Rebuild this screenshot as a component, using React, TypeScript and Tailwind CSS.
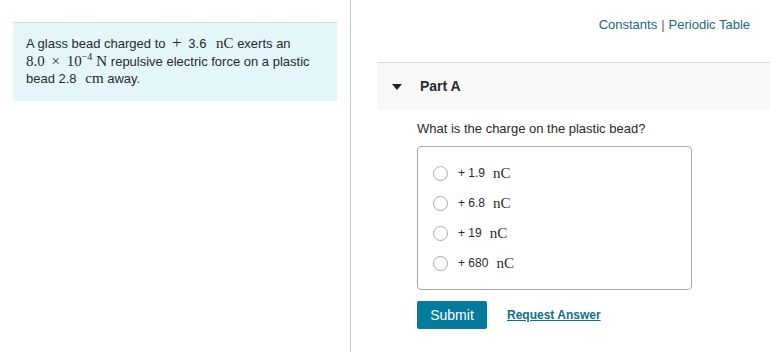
import React from 'react';

const sans = { fontFamily: '"Liberation Sans", Arial, sans-serif' };

const M: React.FC<{ children: React.ReactNode; className?: string }> = ({ children, className }) => (
  <span className={`font-['Liberation_Serif',serif] text-[15px] ${className ?? ''}`}>{children}</span>
);

const options = ['1.9', '6.8', '19', '680'];

export default function App() {
  return (
    <div className="flex w-[777px] h-[352px] bg-white text-[13px] text-[#2a2a2a]" style={sans}>
      {/* Problem statement */}
      <div className="w-[351px] shrink-0 border-r border-[#b9cde2] pt-[22px] pl-[13px] pr-[13px]">
        <div className="h-[79px] bg-[#e3f6f9] border-t border-[#d5dde0] pl-[13px] pr-2 pt-[11px] leading-[17.5px] whitespace-nowrap">
          A glass bead charged to <M className="mx-[3px] text-[17px]">+</M> 3.6 <M className="ml-[6px]">nC</M> exerts an
          <br />
          <M>
            8.0 <span className="mx-[3px]">×</span> 10
            <sup className="text-[10px] leading-none relative -top-[6px]">−4</sup>
            <span className="ml-[4px]">N</span>
          </M>{' '}
          repulsive electric force on a plastic
          <br />
          bead 2.8 <M className="ml-[5px]">cm</M> away.
        </div>
      </div>

      {/* Right column */}
      <div className="flex-1 flex flex-col">
        <div className="h-[46px] flex items-start justify-end pr-[27px] pt-[15px] text-[#17697d]">
          <span>Constants</span>
          <span className="mx-[4px] text-[#666]">|</span>
          <span>Periodic Table</span>
        </div>

        <div className="ml-[26px] mr-[7px] mt-[16px]">
          <div className="h-[48px] bg-[#f8f8f8] border-t border-[#dcdcdc] flex items-center">
            <svg width="10" height="6" viewBox="0 0 10 6" className="ml-[15px]">
              <path d="M0 0 L10 0 L5 6 Z" fill="#222" />
            </svg>
            <span className="ml-[18px] font-bold text-[14px]">Part A</span>
          </div>

          <div className="pl-[40px] pt-[11px]">
            <p className="leading-[16px]">What is the charge on the plastic bead?</p>

            <div className="mt-[9px] w-[275px] h-[144px] border border-[#a8a8a8] rounded-[4px] pt-[11px] pl-[15px] flex flex-col">
              {options.map((o) => (
                <label key={o} className="h-[30px] flex items-center">
                  <span className="w-[15px] h-[15px] rounded-full border border-[#aaaaaa] bg-white" />
                  <span className="ml-[10px] text-[12px]">+ {o}</span>
                  <M className="ml-[8px]">nC</M>
                </label>
              ))}
            </div>

            <div className="mt-[11px] flex items-center">
              <button className="w-[70px] h-[28px] bg-[#047a9c] text-white text-[14px] rounded-[2px]">
                Submit
              </button>
              <a className="ml-[20px] text-[12px] font-bold text-[#0f6f8c] underline">Request Answer</a>
            </div>
          </div>
        </div>
      </div>
    </div>
  );
}
